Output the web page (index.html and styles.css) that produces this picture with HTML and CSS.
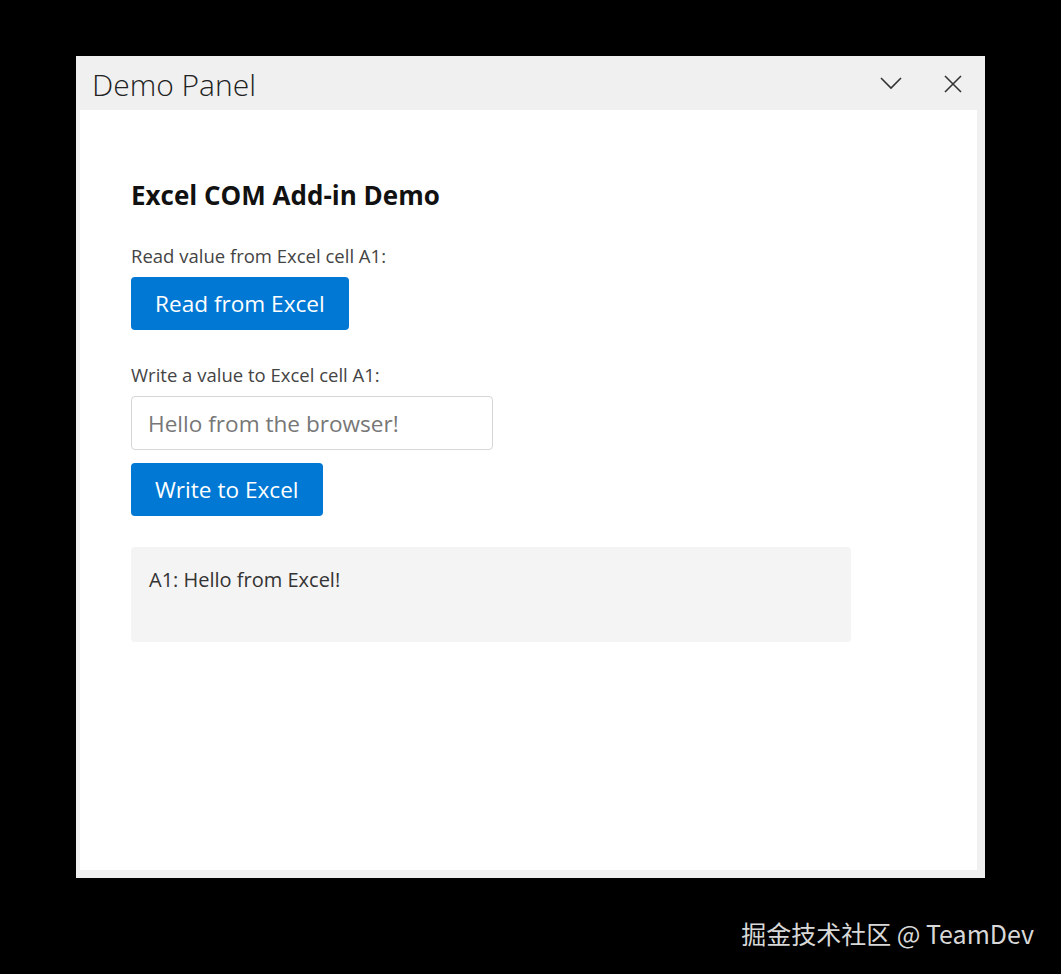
FILE: index.html
```html
<!DOCTYPE html>
<html lang="en">
  <head>
    <meta charset="UTF-8" />
    <meta name="viewport" content="width=device-width, initial-scale=1.0" />
    <title>Demo Panel</title>
    <link rel="stylesheet" href="styles.css">
  </head>
  <body>
    <div class="panel">
      <div class="titlebar">
        <div class="title">Demo Panel</div>
        <div class="controls">
          <svg class="icon" width="24" height="24" viewBox="0 0 24 24">
            <path d="M2 6 L12 16 L22 6" fill="none" stroke="#333" stroke-width="1.6" />
          </svg>
          <svg class="icon" width="20" height="20" viewBox="0 0 20 20">
            <path d="M2 2 L18 18 M18 2 L2 18" fill="none" stroke="#333" stroke-width="1.6" />
          </svg>
        </div>
      </div>
      <div class="content">
        <h2 class="heading">Excel COM Add-in Demo</h2>
        <div class="label">Read value from Excel cell A1:</div>
        <button class="btn">Read from Excel</button>
        <div class="label second">Write a value to Excel cell A1:</div>
        <input type="text" class="value" placeholder="Hello from the browser!" />
        <button class="btn">Write to Excel</button>
        <div class="output">A1: Hello from Excel!</div>
      </div>
    </div>
    <div class="watermark">掘金技术社区 @ TeamDev</div>
  </body>
</html>
```

FILE: styles.css
```css
body {
  margin: 0;
  padding: 56px 0 0 76px;
  background-color: black;
  font-family: "Open Sans", "Noto Sans", sans-serif;
}
.panel {
  width: 909px;
  height: 822px;
  background-color: #f0f0f0;
  display: flex;
  flex-direction: column;
}
.titlebar {
  height: 54px;
  display: flex;
  align-items: center;
  justify-content: space-between;
  padding: 2px 22px 0 16px;
  box-sizing: border-box;
}
.title {
  font-size: 30px;
  font-weight: 300;
  color: #222;
}
.controls {
  display: flex;
  align-items: center;
  gap: 40px;
}
.content {
  flex: 1;
  margin: 0 8px 8px 4px;
  background-color: white;
  padding: 67px 0 0 51px;
}
.heading {
  margin: 0 0 30px 0;
  font-size: 26px;
  font-weight: bold;
  color: #111;
}
.label {
  font-size: 18.5px;
  color: #444;
  margin-bottom: 9px;
}
.second {
  margin-top: 32px;
}
.btn {
  display: block;
  height: 53px;
  padding: 0 24px;
  border: none;
  border-radius: 4px;
  background-color: #0078d4;
  color: white;
  font-family: inherit;
  font-size: 22.6px;
}
.value {
  display: block;
  box-sizing: border-box;
  width: 362px;
  height: 54px;
  margin-bottom: 13px;
  padding: 0 16px;
  border: 1px solid #d6d6d6;
  border-radius: 4px;
  font-family: inherit;
  font-size: 22.6px;
}
.value::placeholder {
  color: #777;
}
.output {
  box-sizing: border-box;
  width: 720px;
  height: 95px;
  margin-top: 31px;
  padding: 19px 18px;
  border-radius: 4px;
  background-color: #f4f4f4;
  font-size: 20px;
  color: #333;
}
.watermark {
  margin-top: 37px;
  padding-right: 27px;
  text-align: right;
  font-size: 25px;
  color: #d8d8d8;
  font-family: "Noto Sans CJK SC", "Noto Sans", sans-serif;
}
```
